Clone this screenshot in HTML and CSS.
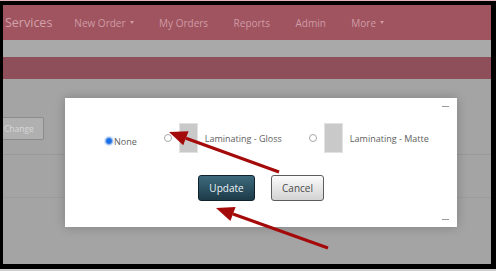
FILE: index.html
```html
<!DOCTYPE html>
<html>
<head>
<meta charset="utf-8">
<link rel="stylesheet" href="styles.css">
</head>
<body>
<div class="frame">
  <div class="screen">
    <nav class="navbar">
      <span class="brand">Services</span>
      <ul class="menu">
        <li>New Order <span class="caret"></span></li>
        <li>My Orders</li>
        <li>Reports</li>
        <li>Admin</li>
        <li>More <span class="caret"></span></li>
      </ul>
    </nav>
    <div class="strip"></div>
    <div class="titlebar"></div>
    <main class="content">
      <div class="row row-first">
        <button class="change">Change</button>
      </div>
      <div class="row row-second"></div>
      <div class="row row-third"></div>
    </main>

    <div class="modal">
      <span class="dash dash-top"></span>
      <div class="options">
        <label class="option opt-none"><span class="radio checked"></span><span class="opt-text">None</span></label>
        <label class="option opt-gloss"><span class="radio"></span><span class="swatch"></span><span class="opt-text">Laminating - Gloss</span></label>
        <label class="option opt-matte"><span class="radio"></span><span class="swatch"></span><span class="opt-text">Laminating - Matte</span></label>
      </div>
      <div class="actions">
        <button class="btn btn-update">Update</button>
        <button class="btn btn-cancel">Cancel</button>
      </div>
      <span class="dash dash-bottom"></span>
    </div>
  </div>
  <svg class="arrows" width="496" height="271" viewBox="0 0 496 271">
    <line x1="279" y1="171" x2="186" y2="137.2" stroke="#a50a0a" stroke-width="3.2"/>
    <polygon points="169,131 188.6,130.2 183.2,144.2" fill="#a50a0a"/>
    <line x1="328" y1="247" x2="233" y2="213" stroke="#a50a0a" stroke-width="3.2"/>
    <polygon points="216,207 235.6,206 230.4,220" fill="#a50a0a"/>
  </svg>
</div>
</body>
</html>
```
FILE: styles.css
```css
html, body {
  margin: 0;
  padding: 0;
  width: 496px;
  height: 271px;
  overflow: hidden;
  background: #000;
  font-family: "Open Sans", "DejaVu Sans", sans-serif;
}
.frame {
  position: relative;
  width: 496px;
  height: 271px;
  box-sizing: border-box;
  border-top: 1px solid #e2b4bb;
  padding: 4px 5px 7px 3px;
  background: linear-gradient(to bottom, #000 0, #000 268px, #cfcfcf 268px);
}
.screen {
  position: relative;
  width: 488px;
  height: 259px;
  overflow: hidden;
  display: flex;
  flex-direction: column;
  background: #a4a4a4;
}
.navbar {
  height: 35px;
  flex: none;
  background: #9f5460;
  display: flex;
  align-items: center;
  color: #cf9ba4;
}
.brand {
  font-size: 12.5px;
  margin-left: 2px;
  margin-right: 22px;
  color: #d3a2aa;
}
.menu {
  display: flex;
  gap: 25.5px;
  list-style: none;
  margin: 0;
  padding: 0;
  font-size: 10px;
}
.menu li {
  display: flex;
  align-items: center;
  gap: 3px;
}
.caret {
  display: inline-block;
  width: 0;
  height: 0;
  border-left: 2.5px solid transparent;
  border-right: 2.5px solid transparent;
  border-top: 3px solid #cf9ba4;
  margin-left: 1px;
}
.strip {
  height: 17px;
  flex: none;
  background: #a9a9a9;
}
.titlebar {
  height: 22px;
  flex: none;
  background: #8f4f5a;
}
.content {
  flex: 1;
  display: flex;
  flex-direction: column;
}
.row-first {
  height: 76px;
  border-bottom: 1px solid #999;
  padding-top: 36px;
  box-sizing: border-box;
}
.row-second {
  height: 43px;
  border-bottom: 1px solid #9c9c9c;
  box-sizing: border-box;
}
.change {
  margin-left: -6px;
  width: 47px;
  height: 23px;
  background: #b0b0b0;
  border: 1px solid #8a8a8a;
  border-radius: 2px;
  font-family: "Open Sans", sans-serif;
  font-size: 8.5px;
  color: #d8d8d8;
  padding: 0 0 0 6px;
  text-align: left;
}
.modal {
  position: absolute;
  left: 62px;
  top: 93px;
  width: 392px;
  height: 129px;
  background: #fff;
  box-shadow: 0 0 10px rgba(0,0,0,0.22);
  box-sizing: border-box;
  padding: 25px 0 0 40px;
  display: flex;
  flex-direction: column;
}
.dash {
  position: absolute;
  right: 8px;
  width: 7px;
  height: 1px;
  background: #9a9a9a;
}
.dash-top { top: 8px; }
.dash-bottom { bottom: 7px; }
.options {
  display: flex;
  align-items: center;
  height: 30px;
  font-size: 9px;
  color: #5e5e5e;
}
.option {
  display: flex;
  align-items: center;
}
.opt-none .opt-text { margin-left: 1px; margin-top: 6px; }
.opt-none { margin-right: 27px; }
.opt-gloss { margin-right: 27px; }
.radio {
  width: 8px;
  height: 8px;
  border-radius: 50%;
  box-sizing: border-box;
  border: 1px solid #a8a8a8;
  background: #fff;
  flex: none;
}
.opt-none .radio { margin-top: 6px; }
.radio.checked {
  background: #1c6fe6;
  border: 1px solid #9ec2f2;
  box-shadow: 0 0 0 1px #d6e6fb;
}
.swatch {
  width: 19px;
  height: 30px;
  background: #c9c9c9;
  border: 1px solid #e2e2e2;
  box-sizing: border-box;
  margin-left: 7px;
  margin-right: 7px;
}
.opt-matte .swatch { margin-left: 7px; margin-right: 7px; }
.actions {
  display: flex;
  justify-content: center;
  gap: 16px;
  margin-top: 22px;
  margin-left: -40px;
}
.btn {
  height: 26px;
  border-radius: 3px;
  font-family: "Open Sans", sans-serif;
  font-size: 10px;
  padding: 0;
  box-sizing: border-box;
}
.btn-update {
  width: 57px;
  color: #eef4f7;
  background: linear-gradient(#3d6a7c, #1d3b48);
  border: 1px solid #10232c;
}
.btn-cancel {
  width: 53px;
  color: #4a4a4a;
  background: linear-gradient(#fbfbfb, #d2d2d2);
  border: 1px solid #5c5c5c;
}
.arrows {
  position: absolute;
  left: 0;
  top: 0;
  pointer-events: none;
}
```
